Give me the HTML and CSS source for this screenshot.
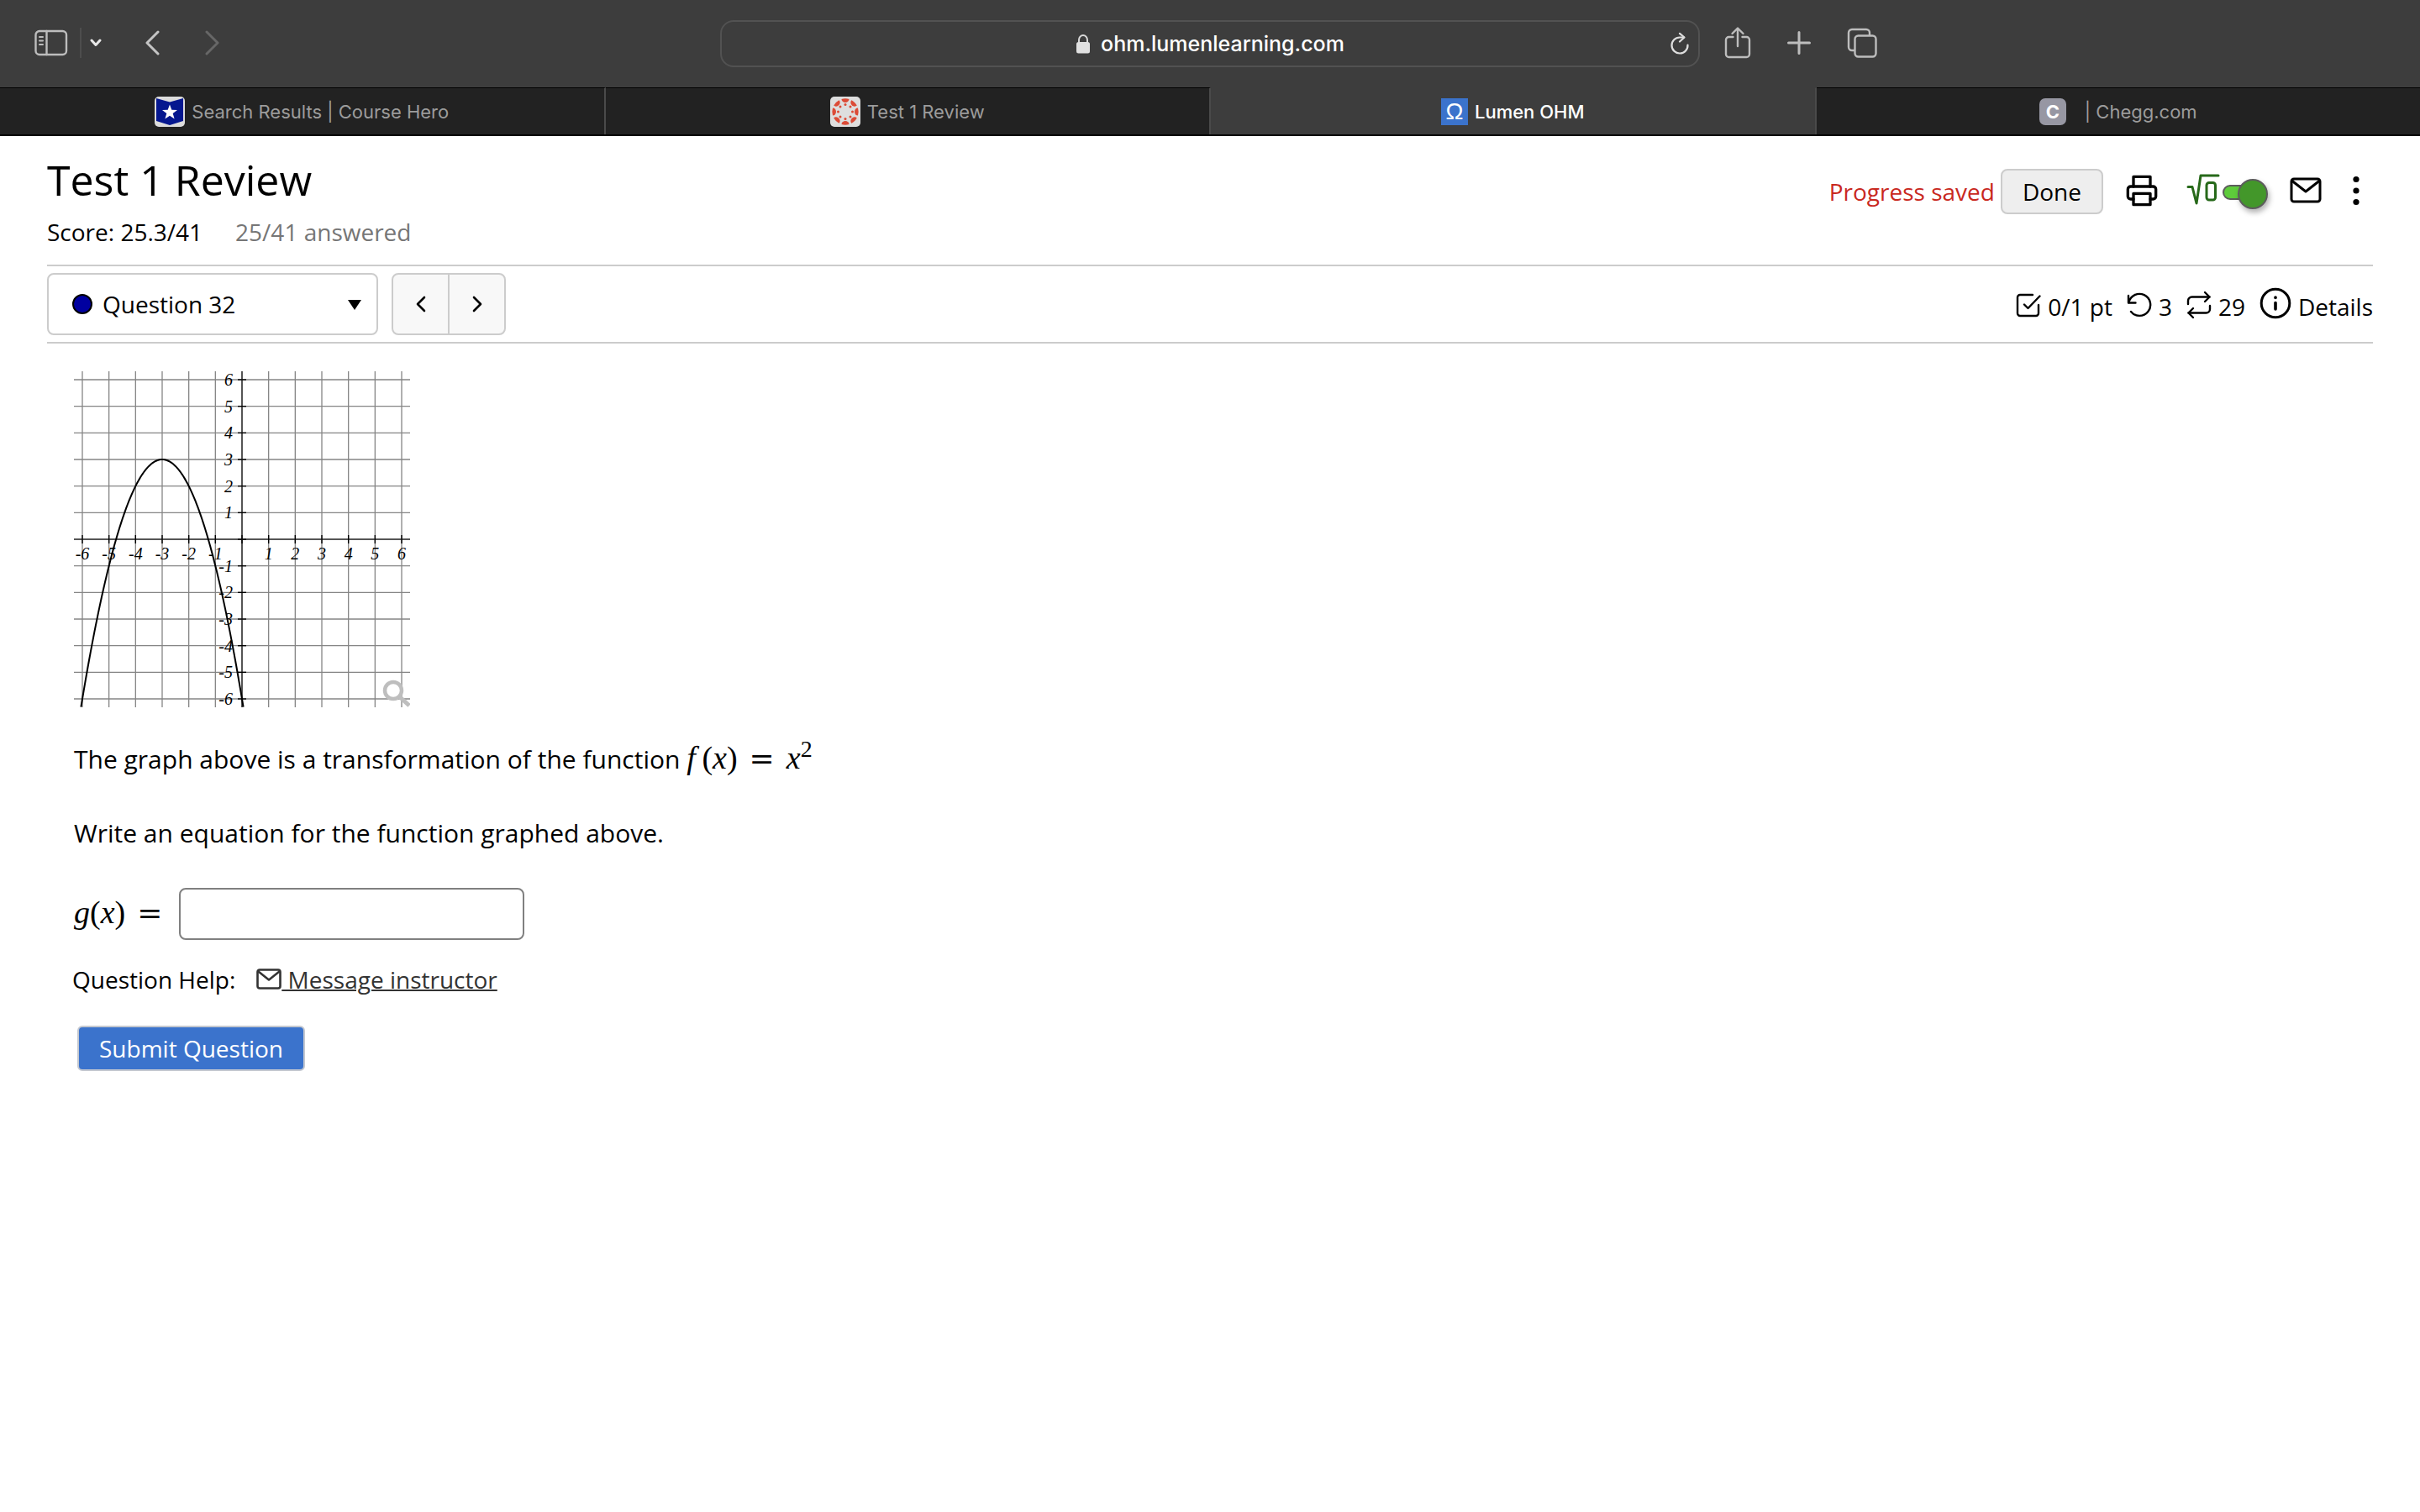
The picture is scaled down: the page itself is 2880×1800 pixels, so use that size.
FILE: index.html
```html
<!DOCTYPE html>
<html lang="en">
<head>
    <meta charset="UTF-8">
    <meta name="viewport" content="width=device-width, initial-scale=1.0">
    <title>Lumen OHM</title>
    <link rel="stylesheet" href="styles.css">
</head>
<body>
    <!-- Browser toolbar -->
    <div class="toolbar">
        <div class="toolbar-left">
            <button class="tool" aria-label="Sidebar">
                <svg width="40" height="32" viewBox="0 0 40 32" fill="none" stroke="#bdbdbd" stroke-width="2.4" stroke-linecap="round">
                    <rect x="1.5" y="2" width="36.5" height="28" rx="4.5"/>
                    <path d="M14.5 2v28"/>
                    <path d="M6 9h4M6 13.5h4M6 18h4" stroke-width="2"/>
                </svg>
            </button>
            <span class="tool-divider"></span>
            <button class="tool tool-chevron" aria-label="Tab groups">
                <svg width="14" height="10" viewBox="0 0 14 10" fill="none" stroke="#e8e8e8" stroke-width="3" stroke-linecap="round" stroke-linejoin="round"><path d="M2 2l5 5.5L12 2"/></svg>
            </button>
            <button class="tool tool-back" aria-label="Back">
                <svg width="18" height="30" viewBox="0 0 18 30" fill="none" stroke="#c4c4c4" stroke-width="3" stroke-linecap="round" stroke-linejoin="round"><path d="M16 2L3 15l13 13"/></svg>
            </button>
            <button class="tool tool-forward" aria-label="Forward" disabled>
                <svg width="18" height="30" viewBox="0 0 18 30" fill="none" stroke="#676767" stroke-width="3" stroke-linecap="round" stroke-linejoin="round"><path d="M2 2l13 13L2 28"/></svg>
            </button>
        </div>

        <div class="address">
            <label class="address-site" for="url">
                <svg width="18" height="24" viewBox="0 0 18 24"><path d="M4 12V7.500a5 5.500 0 0 1 10 0V12" fill="none" stroke="#d8d8d8" stroke-width="2"/><rect x="1" y="10" width="16" height="13.500" rx="2.500" fill="#e0e0e0"/></svg>
            </label>
            <input type="text" id="url" value="ohm.lumenlearning.com" aria-label="Address">
            <button class="reload" aria-label="Reload">
                <svg width="24" height="28" viewBox="0 0 24 28" fill="none" stroke="#dedede" stroke-width="2.200" stroke-linecap="round" stroke-linejoin="round"><path d="M21.500 15.500A9.500 9.500 0 1 1 12 6.500h5"/><path d="M12 1.800l5.500 4.700-5.500 5"/></svg>
            </button>
        </div>

        <div class="toolbar-right">
            <button class="tool" aria-label="Share">
                <svg width="32" height="40" viewBox="0 0 32 40" fill="none" stroke="#bdbdbd" stroke-width="2.400" stroke-linecap="round" stroke-linejoin="round"><path d="M10.500 13H5.500a3.500 3.500 0 0 0-3.500 3.500v17A3.500 3.500 0 0 0 5.500 37h21a3.500 3.500 0 0 0 3.500-3.500v-17a3.500 3.500 0 0 0-3.500-3.500h-5"/><path d="M16 24V3M9.500 9L16 2.500 22.500 9"/></svg>
            </button>
            <button class="tool" aria-label="New tab">
                <svg width="28" height="28" viewBox="0 0 28 28" stroke="#bdbdbd" stroke-width="3" stroke-linecap="round"><path d="M14 1.500v25M1.500 14h25"/></svg>
            </button>
            <button class="tool" aria-label="Tab overview">
                <svg width="36" height="36" viewBox="0 0 36 36" fill="none" stroke="#bdbdbd" stroke-width="2.400" stroke-linejoin="round"><path d="M9.500 27H6a4 4 0 0 1-4-4V6a4 4 0 0 1 4-4h17a4 4 0 0 1 4 4v3"/><rect x="9.500" y="9.500" width="25" height="25" rx="4"/></svg>
            </button>
        </div>
    </div>

    <!-- Tabs -->
    <nav class="tabs">
        <a href="#" class="tab">
            <svg width="36" height="36" viewBox="0 0 36 36"><rect width="36" height="36" rx="5" fill="#dcdcdc"/><path d="M2 2l16 4.500L34 2v27l-16 5-16-5z" fill="#05178f"/><path d="M18 9.500l2.300 6.200 6.700.200-5.300 4.100 1.900 6.500L18 22.700l-5.600 3.800 1.900-6.500L9 15.900l6.700-.200z" fill="#fff"/></svg>
            <span>Search Results | Course Hero</span>
        </a>
        <a href="#" class="tab">
            <svg width="36" height="36" viewBox="0 0 36 36">
                <rect width="36" height="36" rx="5" fill="#dedede"/>
                <g fill="#dc4b37">
                    <g id="petals">
                        <path id="petal" d="M13.500 3a16 16 0 0 1 9 0 4.500 4 0 0 1-9 0z"/>
                        <use href="#petal" transform="rotate(45 18 18)"/>
                        <use href="#petal" transform="rotate(90 18 18)"/>
                        <use href="#petal" transform="rotate(135 18 18)"/>
                    </g>
                    <use href="#petals" transform="rotate(180 18 18)"/>
                    <circle cx="18" cy="9.500" r="1.500"/><circle cx="18" cy="26.500" r="1.500"/>
                    <circle cx="9.500" cy="18" r="1.500"/><circle cx="26.500" cy="18" r="1.500"/>
                    <circle cx="12" cy="12" r="1.500"/><circle cx="24" cy="12" r="1.500"/>
                    <circle cx="12" cy="24" r="1.500"/><circle cx="24" cy="24" r="1.500"/>
                </g>
            </svg>
            <span>Test 1 Review</span>
        </a>
        <a href="#" class="tab active">
            <span class="favicon favicon-ohm">Ω</span>
            <span>Lumen OHM</span>
        </a>
        <a href="#" class="tab">
            <span class="favicon favicon-chegg">C</span>
            <span class="chegg-title">| Chegg.com</span>
        </a>
    </nav>

    <div class="page">
        <header class="assess-header">
            <div class="assess-title">
                <h1>Test 1 Review</h1>
                <p class="score"><span>Score: 25.3/41</span><span class="answered">25/41 answered</span></p>
            </div>
            <div class="assess-tools">
                <span class="saved">Progress saved</span>
                <button class="done">Done</button>
                <button class="icon-btn" aria-label="Print">
                    <svg width="40" height="40" viewBox="0 0 24 24" fill="none" stroke="#000" stroke-width="2" stroke-linecap="round" stroke-linejoin="round"><path d="M6 9V2h12v7"/><path d="M6 18H4a2 2 0 0 1-2-2v-5a2 2 0 0 1 2-2h16a2 2 0 0 1 2 2v5a2 2 0 0 1-2 2h-2"/><path d="M6 14h12v8H6z"/></svg>
                </button>
                <label class="switch">
                    <svg width="40" height="40" viewBox="0 0 40 40" fill="none" stroke="#27691a" stroke-width="3" stroke-linecap="round" stroke-linejoin="round"><path d="M2 16.500h5L12 36l5-33h21"/><rect x="24" y="11.500" width="10.500" height="20.500" rx="3"/></svg>
                    <input type="checkbox" checked aria-label="Equation editor">
                    <span class="track"></span>
                </label>
                <button class="icon-btn" aria-label="Messages">
                    <svg width="38" height="32" viewBox="0 0 38 32" fill="none" stroke="#000" stroke-width="3" stroke-linejoin="round"><rect x="2" y="2" width="34" height="27" rx="3"/><path d="M3 4.500l16 12.500L35 4.500"/></svg>
                </button>
                <button class="icon-btn more" aria-label="More">
                    <svg width="8" height="36" viewBox="0 0 8 36"><circle cx="4" cy="4.500" r="3.600"/><circle cx="4" cy="18" r="3.600"/><circle cx="4" cy="31.500" r="3.600"/></svg>
                </button>
            </div>
        </header>

        <div class="question-bar">
            <div class="question-picker">
                <svg class="dot" width="24" height="24" viewBox="0 0 24 24"><circle cx="12" cy="12" r="11" fill="#0000a0" stroke="#000" stroke-width="2"/></svg>
                <select aria-label="Question">
                    <option>Question 32</option>
                </select>
                <svg class="caret" width="16" height="12" viewBox="0 0 16 12"><path d="M0 0h16L8 12z"/></svg>
            </div>
            <div class="pager">
                <button aria-label="Previous question">
                    <svg width="12" height="20" viewBox="0 0 12 20" fill="none" stroke="#000" stroke-width="2.600" stroke-linecap="round" stroke-linejoin="round"><path d="M10 2l-8 8 8 8"/></svg>
                </button>
                <button aria-label="Next question">
                    <svg width="12" height="20" viewBox="0 0 12 20" fill="none" stroke="#000" stroke-width="2.600" stroke-linecap="round" stroke-linejoin="round"><path d="M2 2l8 8-8 8"/></svg>
                </button>
            </div>
            <div class="status">
                <span class="stat">
                    <svg width="30" height="30" viewBox="0 0 30 30" fill="none" stroke="#000" stroke-width="2.400" stroke-linecap="round" stroke-linejoin="round"><path d="M20 3H5a3 3 0 0 0-3 3v19a3 3 0 0 0 3 3h19a3 3 0 0 0 3-3V15"/><path d="M10 14.500l4.500 4.500L28.500 4.500"/></svg>
                    <span>0/1 pt</span>
                </span>
                <span class="stat">
                    <svg width="30" height="30" viewBox="0 0 30 30" fill="none" stroke="#000" stroke-width="2.400" stroke-linecap="round" stroke-linejoin="round"><path d="M2 4v8.500h8.500"/><path d="M2.500 12a13 13 0 1 1 2.500 11"/></svg>
                    <span>3</span>
                </span>
                <span class="stat">
                    <svg width="30" height="34" viewBox="0 0 30 34" fill="none" stroke="#000" stroke-width="2.400" stroke-linecap="round" stroke-linejoin="round"><path d="M22 2l5.500 5.500L22 13"/><path d="M2 16v-4a4.500 4.500 0 0 1 4.500-4.500h21"/><path d="M8 32l-5.500-5.500L8 21"/><path d="M28 18v4a4.500 4.500 0 0 1-4.500 4.500h-21"/></svg>
                    <span>29</span>
                </span>
                <button class="details">
                    <svg width="38" height="38" viewBox="0 0 38 38" fill="none" stroke="#000" stroke-width="3" stroke-linecap="round"><circle cx="19" cy="19" r="16.800"/><path d="M19 18.500v7.500" stroke-width="3.600"/><path d="M19 12v.500" stroke-width="3.600"/></svg>
                    <span>Details</span>
                </button>
            </div>
        </div>

        <main class="question">
            <svg class="graph" width="400" height="400" viewBox="-200 -200 400 400" role="img" aria-label="Graph of a downward parabola with vertex (-3, 3)">
                <g id="grid" stroke="#858585" stroke-width="1.300"></g>
                <path d="M0 -200V200M-200 0H200" stroke="#555" stroke-width="2"/>
                <g id="ticks" stroke="#000" stroke-width="1.400"></g>
                <g id="labels"></g>
                <path id="curve" fill="none" stroke="#000" stroke-width="2"/>
                <g fill="none" stroke="#bebebe" stroke-width="4.500"><circle cx="180" cy="180" r="10"/><path d="M187 187l12 11" stroke-width="5"/></g>
            </svg>

            <p>The graph above is a transformation of the function <span class="math"><i>f</i>&thinsp;(<i>x</i>)<span class="eq">=</span><i>x</i><sup>2</sup></span></p>
            <p>Write an equation for the function graphed above.</p>

            <div class="answer">
                <label class="math" for="answer"><i>g</i>(<i>x</i>)<span class="eq">=</span></label>
                <input type="text" id="answer">
            </div>

            <div class="help">
                <span>Question Help:</span>
                <a href="#">
                    <svg width="30" height="26" viewBox="0 0 30 26" fill="none" stroke="#333" stroke-width="2.600" stroke-linejoin="round"><rect x="1.500" y="1.500" width="27" height="22" rx="2.500"/><path d="M2.500 3.500L15 13.500 27.500 3.500"/></svg><span class="link-text">&nbsp;Message instructor</span>
                </a>
            </div>

            <button class="submit">Submit Question</button>
        </main>
    </div>

    <script src="graph.js"></script>
</body>
</html>
```
FILE: styles.css
```css
* {
    box-sizing: border-box;
}

body {
    margin: 0;
    background-color: #fff;
    color: #000;
    font-family: 'Open Sans', 'Noto Sans', sans-serif;
    font-size: 28px;
    line-height: 40px;
}

h1, p {
    margin: 0;
    font-weight: normal;
}

button, input, select {
    font: inherit;
    color: inherit;
}

button {
    padding: 0;
    border: none;
    background: none;
    cursor: pointer;
}

svg {
    display: block;
    flex: none;
}

/* Browser */
.toolbar {
    display: grid;
    grid-template-columns: 1fr minmax(0, 1166px) 1fr;
    align-items: center;
    height: 104px;
    background-color: #3d3d3d;
    font-family: Inter, sans-serif;
}

.toolbar-left, .toolbar-right {
    display: flex;
    align-items: center;
    padding-bottom: 2px;
}

.toolbar-left {
    padding-left: 41px;
}

.tool-divider {
    width: 2px;
    height: 36px;
    margin: 0 10px 0 14px;
    background-color: #4d4d4d;
}

.tool-back {
    margin-left: 51px;
}

.tool-forward {
    margin-left: 54px;
}

.toolbar-right {
    gap: 43px;
    padding-left: 29px;
}

.address {
    display: flex;
    align-items: center;
    justify-content: center;
    position: relative;
    height: 56px;
    border: 2px solid #525252;
    border-radius: 16px;
    gap: 12px;
}

.address input {
    field-sizing: content;
    padding: 0;
    border: none;
    outline: none;
    background: none;
    color: #fff;
    font-size: 25px;
    line-height: 32px;
    font-weight: 500;
}

.reload {
    position: absolute;
    right: 10px;
}

.tabs {
    display: flex;
    height: 58px;
    border-bottom: 2px solid #000;
    background-color: #222;
    font-family: Inter, sans-serif;
    font-size: 22px;
}

.tab {
    display: flex;
    flex: 1;
    align-items: center;
    justify-content: center;
    gap: 8px;
    border-top: 1px solid #000;
    border-right: 2px solid #4a4a4a;
    color: #9c9c9c;
    text-decoration: none;
}

.tab:last-child {
    border-right: none;
}

.tab.active {
    border-top-color: #3d3d3d;
    background-color: #3d3d3d;
    color: #fff;
    font-weight: 500;
}

.favicon {
    display: flex;
    align-items: center;
    justify-content: center;
    width: 32px;
    height: 32px;
    color: #fff;
}

.favicon-ohm {
    background-color: #3b73cc;
    font-family: 'Liberation Sans', sans-serif;
    font-size: 28px;
}

.favicon-chegg {
    border-radius: 7px;
    background-color: #9797a3;
    font-weight: 700;
}

.chegg-title {
    padding-left: 14px;
}

/* Assessment */
.page {
    padding: 0 56px;
}

.assess-header {
    display: flex;
    justify-content: space-between;
    padding: 20px 0 19px;
    border-bottom: 2px solid #ccc;
}

h1 {
    margin-bottom: 10px;
    font-size: 50px;
    line-height: 64px;
}

.score {
    display: flex;
    gap: 39px;
}

.answered {
    color: #767676;
}

.assess-tools {
    display: flex;
    align-items: center;
    height: 92px;
    padding-right: 16px;
}

.saved {
    color: #c9291f;
}

.done {
    height: 54px;
    margin: 0 26px 0 7px;
    padding: 0 24px;
    border: 2px solid #ccc;
    border-radius: 8px;
    background-color: #eee;
}

.icon-btn {
    padding-bottom: 2px;
}

.switch {
    display: flex;
    align-items: center;
    position: relative;
    margin: 0 28px 0 33px;
}

.switch input {
    position: absolute;
    opacity: 0;
}

.switch svg {
    margin-bottom: 4px;
}

.track {
    position: relative;
    width: 52px;
    height: 18px;
    margin: 2px 0 0 3px;
    border: 2px solid #5c5c5c;
    border-radius: 9px;
    background-color: #5ecb3b;
}

.track::after {
    content: "";
    position: absolute;
    right: -4px;
    top: -9px;
    width: 32px;
    height: 32px;
    border: 2px solid #5c5c5c;
    border-radius: 50%;
    background-color: #43972a;
    box-shadow: 2px 4px 6px rgba(0, 0, 0, 0.3);
}

.more {
    margin-left: 37px;
}

.question-bar {
    display: flex;
    align-items: center;
    padding: 8px 0;
    border-bottom: 2px solid #ccc;
}

.question-picker {
    display: flex;
    align-items: center;
    width: 394px;
    height: 74px;
    padding: 0 18px 0 28px;
    border: 2px solid #ccc;
    border-radius: 8px;
}

.question-picker select {
    flex: 1;
    padding: 0 0 0 12px;
    border: none;
    outline: none;
    background: none;
    appearance: none;
}

.caret {
    margin-top: 2px;
}

.pager {
    display: flex;
    margin-left: 16px;
    border: 2px solid #ccc;
    border-radius: 8px;
    background-color: #f8f8f8;
}

.pager button {
    display: flex;
    align-items: center;
    justify-content: center;
    width: 65px;
    height: 70px;
}

.pager button + button {
    width: 67px;
    border-left: 2px solid #ccc;
}

.status {
    display: flex;
    align-items: center;
    gap: 17px;
    margin-left: auto;
}

.stat, .details {
    display: flex;
    align-items: center;
    gap: 8px;
}

.stat {
    padding-top: 5px;
}

.stat svg {
    margin-bottom: 3px;
}

.details {
    padding-top: 2px;
}

.details svg {
    margin-bottom: 4px;
}

.details span {
    padding-top: 3px;
}

/* Question */
.question {
    padding: 33px 32px;
    font-size: 30px;
}

.graph {
    margin-bottom: 42px;
}

.graph text {
    font-family: 'Liberation Serif', serif;
    font-size: 20px;
    font-style: italic;
    text-anchor: middle;
}

.question p {
    margin-bottom: 48px;
}

.math {
    font-family: 'Liberation Serif', serif;
    font-size: 38px;
    line-height: 0;
}

.eq {
    margin: 0 14px;
    font-family: 'DejaVu Serif', serif;
    font-size: 36px;
}

.math sup {
    font-size: 28px;
    line-height: 0;
}

.answer {
    display: flex;
    align-items: center;
    gap: 6px;
    margin: -3px 0 27px;
}

.answer .math {
    padding-bottom: 4px;
}

.answer input {
    width: 411px;
    height: 62px;
    padding: 0 12px;
    border: 2px solid #808080;
    border-radius: 8px;
}

.help {
    display: flex;
    gap: 25px;
    margin: 0 0 35px -2px;
    font-size: 28px;
}

.help a {
    display: flex;
    align-items: center;
    color: #333;
    text-decoration: none;
}

.link-text {
    text-decoration: underline;
    text-decoration-thickness: 2px;
}

.submit {
    height: 54px;
    margin-left: 4px;
    padding: 0 24px;
    border: 2px solid #c4c8d0;
    border-radius: 6px;
    background-color: #3b73cc;
    color: #fff;
    font-size: 28px;
}
```
FILE: graph.js
```js
const UNIT = 95 / 3;
const SVG = 'http://www.w3.org/2000/svg';

function line(parent, x1, y1, x2, y2) {
    const el = document.createElementNS(SVG, 'path');
    el.setAttribute('d', `M${x1} ${y1}L${x2} ${y2}`);
    document.getElementById(parent).appendChild(el);
}

function label(x, y, value) {
    const el = document.createElementNS(SVG, 'text');
    el.setAttribute('x', x);
    el.setAttribute('y', y);
    el.textContent = value;
    if (x < 0 && x > -20) {
        el.style.textAnchor = 'end';
    }
    document.getElementById('labels').appendChild(el);
}

for (let i = -6; i <= 6; i++) {
    const p = i * UNIT;
    line('ticks', p, -5, p, 5);
    line('ticks', -5, p, 5, p);
    if (i !== 0) {
        line('grid', p, -200, p, 200);
        line('grid', -200, p, 200, p);
        label(p, 24, i);
        label(-11, -p + 7, i);
    }
}

// g(x) = -(x + 3)^2 + 3
let d = '';
for (let x = -6.05; x <= 0.06; x += 0.05) {
    const y = 3 - (x + 3) ** 2;
    d += (d ? 'L' : 'M') + x * UNIT + ' ' + -y * UNIT;
}
document.getElementById('curve').setAttribute('d', d);
```
